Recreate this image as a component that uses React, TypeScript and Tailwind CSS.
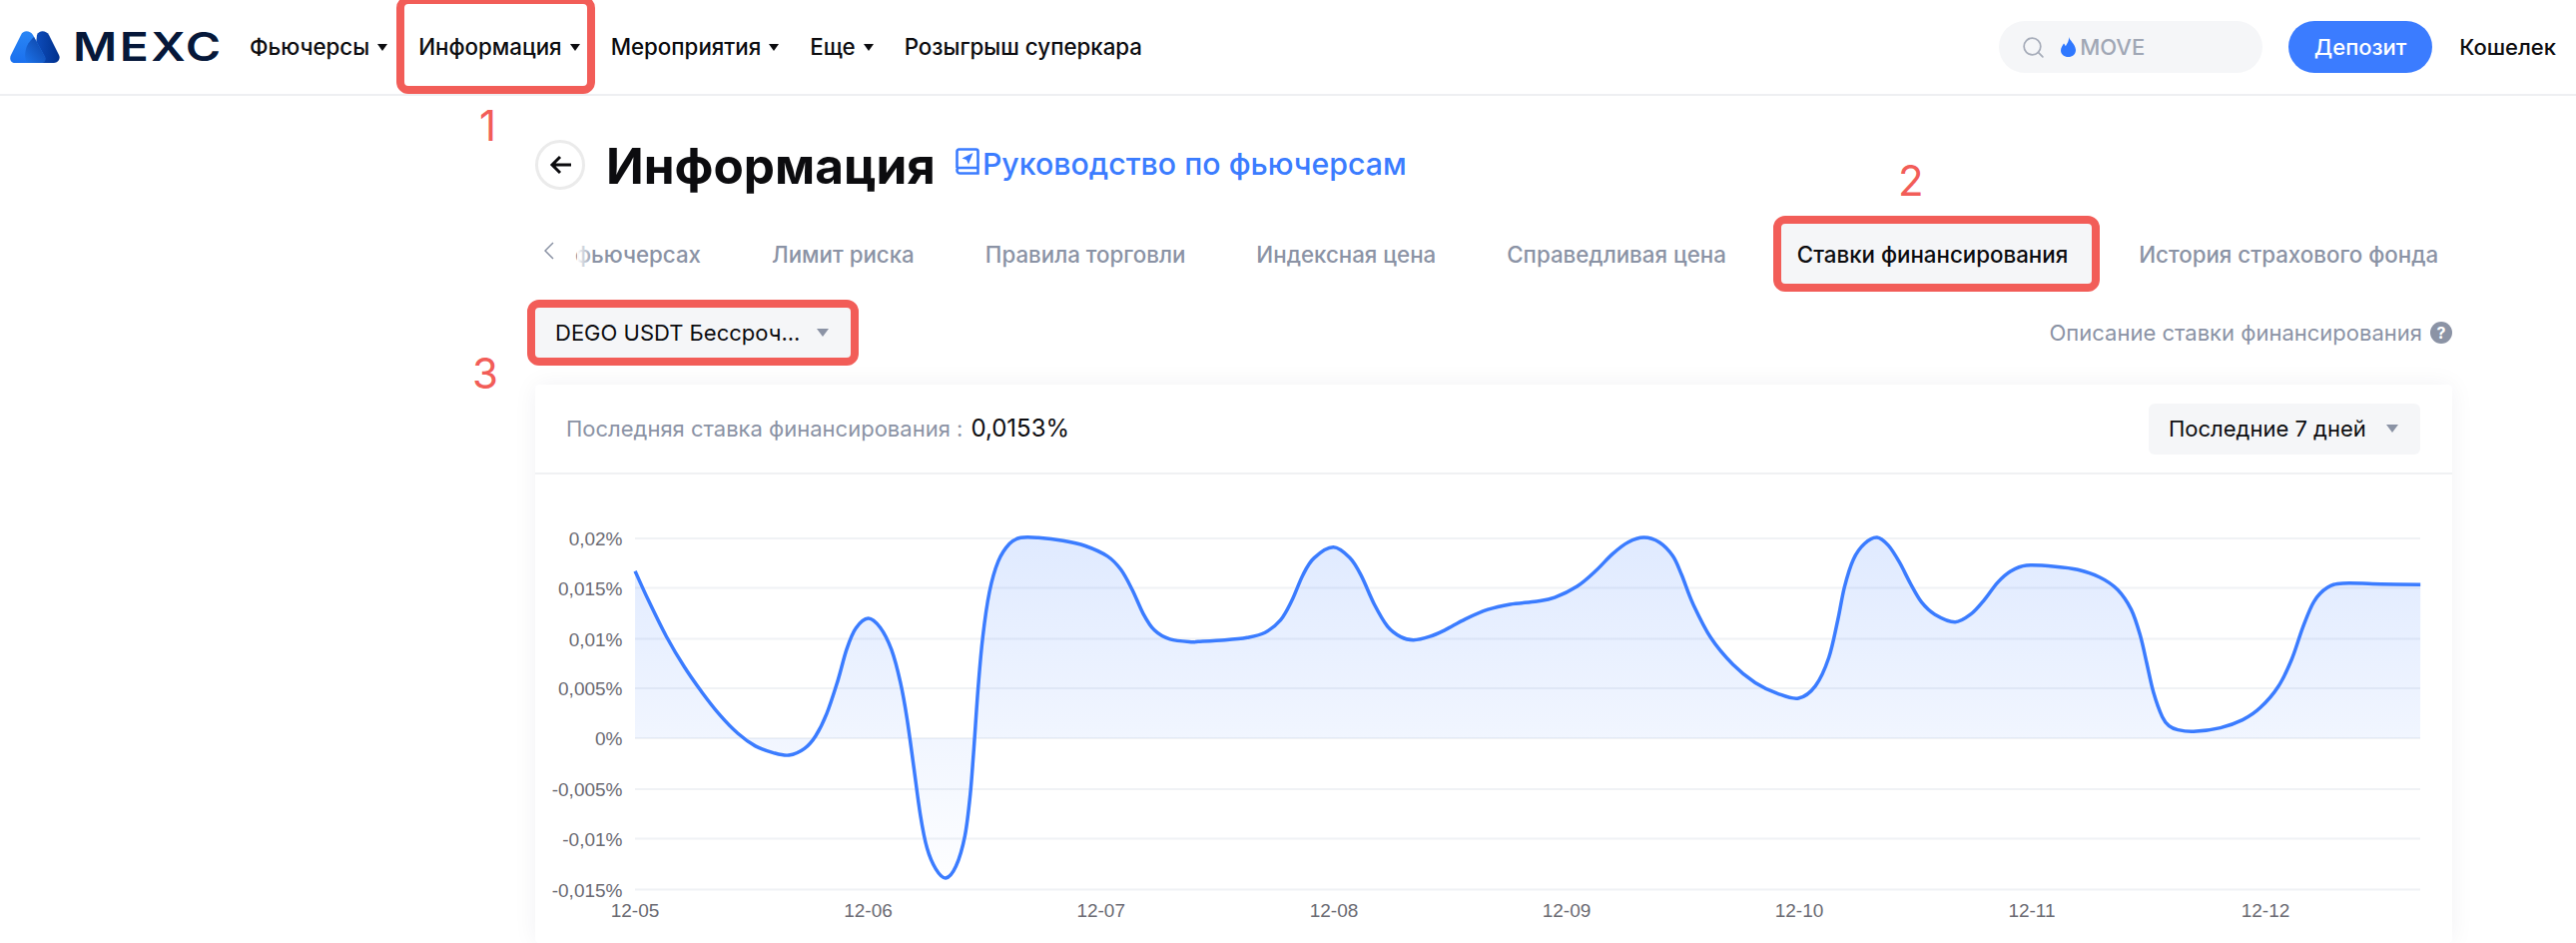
import { Search } from 'lucide-react';

const FONT = 'font-["Inter","Liberation_Sans",sans-serif]';

// points read off the reference, in page pixels
const fromZoom = (ox: number, pts: number[][]) => pts.map(([x, y]) => [ox + x / 2.24, 500 + y / 3]);

const RAW_CURVE = [
  ...fromZoom(520, [
    [260, 215], [290, 305], [330, 415], [370, 505], [410, 580], [450, 650], [490, 705], [530, 745], [570, 763], [605, 768],
    [640, 755], [665, 715], [690, 650], [715, 550], [735, 440], [755, 375], [783, 357], [810, 375], [835, 440], [855, 540],
    [870, 650], [885, 800], [900, 960], [915, 1060], [935, 1120], [957, 1137], [980, 1115], [1000, 1030], [1012, 900],
    [1020, 750], [1030, 550], [1040, 400], [1055, 260], [1075, 175], [1100, 125], [1125, 115], [1165, 115], [1220, 122],
    [1270, 137], [1320, 165], [1350, 205], [1375, 265], [1400, 350], [1425, 400], [1460, 425], [1510, 428],
  ]),
  ...fromZoom(1200, [
    [0, 427], [60, 423], [110, 416], [150, 405], [185, 370], [210, 310], [235, 220], [260, 165], [303, 143], [340, 165],
    [365, 220], [395, 320], [425, 390], [455, 417], [483, 422], [520, 415], [555, 392], [600, 357], [650, 328], [700, 312],
    [760, 308], [800, 298], [850, 265], [890, 220], [930, 160], [965, 122], [1000, 114], [1035, 122], [1065, 160], [1085, 225],
    [1110, 320], [1150, 425], [1200, 500], [1250, 555], [1300, 587], [1347, 597], [1385, 575], [1415, 490], [1435, 370],
    [1450, 250], [1470, 170], [1495, 125],
  ]),
  ...fromZoom(1880, [
    [0, 114], [25, 130], [50, 185], [75, 255], [100, 315], [130, 352], [175, 368], [210, 352], [240, 305], [270, 245],
    [300, 210], [335, 198], [400, 200], [450, 208], [500, 230], [540, 265], [570, 320], [590, 400], [605, 490], [620, 590],
    [640, 660], [655, 684], [675, 694], [710, 697], [770, 690], [820, 665], [860, 630], [900, 570], [930, 490], [955, 380], [980, 295],
    [1010, 258], [1045, 252], [1130, 254], [1219, 256],
  ]),
];

// irons out reading errors, leaves the peaks and troughs where they are
function relax(pts: number[][]): number[][] {
  return pts.map((p, i) => {
    if (i === 0 || i === pts.length - 1) return p;
    const a = pts[i - 1];
    const b = pts[i + 1];
    if ((p[1] - a[1]) * (b[1] - p[1]) <= 0) return p;
    const mid = a[1] + ((b[1] - a[1]) * (p[0] - a[0])) / (b[0] - a[0]);
    return [p[0], 0.6 * p[1] + 0.4 * mid];
  });
}

function smoothPath(pts: number[][]): string {
  let d = `M${pts[0][0].toFixed(1)} ${pts[0][1].toFixed(1)}`;
  for (let i = 0; i < pts.length - 1; i++) {
    const p0 = pts[Math.max(i - 1, 0)];
    const p1 = pts[i];
    const p2 = pts[i + 1];
    const p3 = pts[Math.min(i + 2, pts.length - 1)];
    const c1x = p1[0] + (p2[0] - p0[0]) / 6;
    const c1y = p1[1] + (p2[1] - p0[1]) / 6;
    const c2x = p2[0] - (p3[0] - p1[0]) / 6;
    const c2y = p2[1] - (p3[1] - p1[1]) / 6;
    d += `C${c1x.toFixed(1)} ${c1y.toFixed(1)} ${c2x.toFixed(1)} ${c2y.toFixed(1)} ${p2[0].toFixed(1)} ${p2[1].toFixed(1)}`;
  }
  return d;
}

const LINE = smoothPath(relax(RAW_CURVE));
const AREA = `${LINE}L2424 739L636 739Z`;

const Y_TICKS = [
  { label: '0,02%', y: 539 },
  { label: '0,015%', y: 588.5 },
  { label: '0,01%', y: 639.5 },
  { label: '0,005%', y: 689 },
  { label: '0%', y: 739 },
  { label: '-0,005%', y: 790 },
  { label: '-0,01%', y: 839.5 },
  { label: '-0,015%', y: 890.5 },
];

const X_TICKS = [
  { label: '12-05', x: 636 },
  { label: '12-06', x: 869.5 },
  { label: '12-07', x: 1102.7 },
  { label: '12-08', x: 1336 },
  { label: '12-09', x: 1569 },
  { label: '12-10', x: 1802 },
  { label: '12-11', x: 2035 },
  { label: '12-12', x: 2269 },
];

function Caret() {
  return <span className="inline-block w-0 h-0 border-x-[5px] border-x-transparent border-t-[7px] border-t-[#0c0c0f]" />;
}

function GrayCaret() {
  return <span className="inline-block w-0 h-0 border-x-[6px] border-x-transparent border-t-[8px] border-t-[#8b93a5]" />;
}

function Logo() {
  return (
    <svg width="50" height="32" viewBox="0 0 50 32" className="shrink-0">
      <defs>
        <linearGradient id="logoA" x1="0" y1="0" x2="0" y2="1">
          <stop offset="0" stopColor="#2a86f5" />
          <stop offset="1" stopColor="#1a70ee" />
        </linearGradient>
        <linearGradient id="logoB" x1="0" y1="0" x2="1" y2="0">
          <stop offset="0" stopColor="#0f4fc0" />
          <stop offset="1" stopColor="#00308c" />
        </linearGradient>
        <linearGradient id="logoC" x1="1" y1="0" x2="0" y2="1">
          <stop offset="0" stopColor="#0c3f9f" />
          <stop offset="1" stopColor="#1c74ec" />
        </linearGradient>
      </defs>
      <path d="M27 4C29 -1 36 -1 39 4L49 24C51 28 48 32 44 32H24Z" fill="url(#logoB)" />
      <path d="M11 4C13 -1 20 -1 23 4L35 26C36 29 34 32 31 32H5C1 32 -1 28 1 24Z" fill="url(#logoA)" />
      <path d="M24 6L35 26C36.500 29 35 32 31 32H17C14 27 15 20 17 15C19 11 21 9 24 6Z" fill="url(#logoC)" />
    </svg>
  );
}

function NavItem({ label, marked = false }: { label: string; marked?: boolean }) {
  return (
    <div className="relative flex items-center h-full gap-2 whitespace-nowrap">
      <span className="text-[#0c0c0f]">{label}</span>
      <Caret />
      {marked && <div className="absolute -left-[22px] -right-[15px] -top-1 bottom-0 border-8 border-[#f25d58] rounded-xl" />}
    </div>
  );
}

function Tab({ label, active = false }: { label: string; active?: boolean }) {
  if (active) {
    return (
      <div className="relative flex items-center h-[60px] text-[#0c0c0f] whitespace-nowrap">
        <div className="absolute inset-y-0 -left-4 -right-6 bg-[#f5f6f8] rounded" />
        <span className="relative pt-0.5">{label}</span>
        <div className="absolute -inset-y-2 -left-6 -right-8 border-8 border-[#f25d58] rounded-xl" />
      </div>
    );
  }
  return <div className="flex items-center h-[60px] pt-0.5 text-[#8b93a5] whitespace-nowrap">{label}</div>;
}

function Header() {
  return (
    <header className="flex items-center h-[96px] pl-[10px] pr-5 border-b-2 border-[#eeeff2] bg-white">
      <div className="flex items-center gap-[13px]">
        <Logo />
        <span className="w-[145px] text-[40px] leading-none font-semibold tracking-[2px] text-[#06183a] origin-left scale-x-[1.2]">MEXC</span>
      </div>
      <nav className="flex items-center h-full ml-[32px] gap-[31px] text-[22.3px] font-medium">
        <NavItem label="Фьючерсы" />
        <NavItem label="Информация" marked />
        <NavItem label="Мероприятия" />
        <NavItem label="Еще" />
        <span className="text-[#0c0c0f] whitespace-nowrap">Розыгрыш суперкара</span>
      </nav>
      <div className="flex items-center ml-auto">
        <div className="flex items-center w-[264px] h-[52px] pl-[22px] rounded-full bg-[#f5f6f8] text-[22px] font-medium text-[#a0a7b5]">
          <Search size={25} strokeWidth={1.7} className="text-[#a7adba]" />
          <svg width="15" height="20" viewBox="0 0 15 20" className="ml-[15px] mr-[4px]">
            <path d="M8 0C8.500 3 14.500 7 15 13C15 17.500 11.500 20 7.500 20C3.500 20 0 17.500 0 13.500C0 10.500 1.800 8.500 3 6.500C3.800 7.300 4.300 8.200 4.800 9.200C6.500 6.500 8.500 3.500 8 0Z" fill="#2f78ff" />
          </svg>
          MOVE
        </div>
        <button className="w-[144px] h-[52px] ml-[26px] rounded-full bg-[#3b7cff] text-white text-[22px] font-medium">Депозит</button>
        <span className="ml-[27px] text-[22px] font-medium text-[#0c0c0f]">Кошелек</span>
      </div>
    </header>
  );
}

function TitleRow() {
  return (
    <div className="flex items-center h-[50px] mt-[44px]">
      <div className="flex items-center justify-center w-[50px] h-[50px] rounded-full border-[3px] border-[#ebebeb]">
        <svg width="22" height="20" viewBox="0 0 22 20" fill="none" stroke="#0c0c0f" strokeWidth="3">
          <path d="M22 10H3M11 2L3 10L11 18" />
        </svg>
      </div>
      <h1 className="ml-[21px] pt-[3px] text-[49.5px] leading-none font-bold text-[#0c0c0f]">Информация</h1>
      <svg width="24" height="27" viewBox="0 0 24 27" fill="none" className="ml-[20px] -mt-2">
        <path d="M1.500 20V3.500A2 2 0 0 1 3.500 1.500H20.500A2 2 0 0 1 22.500 3.500V25.500H4.500A3 3 0 0 1 1.500 22.500V22A2 2 0 0 1 3.500 20H22.500" stroke="#3b7cff" strokeWidth="2.600" />
        <path d="M17.500 5L6.500 10.500L11 12L13 16.500Z" fill="#3b7cff" />
      </svg>
      <a className="ml-[3px] text-[30.3px] font-medium text-[#3b7cff]">Руководство по фьючерсам</a>
    </div>
  );
}

function Tabs() {
  return (
    <div className="flex items-center h-[60px] mt-[34px] text-[22.3px] font-medium">
      <svg width="10" height="18" viewBox="0 0 10 18" fill="none" stroke="#8b93a5" strokeWidth="1.500" className="ml-[9px] -mt-1.5">
        <path d="M9 1L1 9L9 17" />
      </svg>
      <div className="relative flex justify-end w-[124px] ml-[23px] pt-0.5 whitespace-nowrap text-[#8b93a5]">
        <span>фьючерсах</span>
        <div className="absolute left-0 top-0 bottom-0 w-[16px] bg-gradient-to-r from-white to-transparent" />
      </div>
      <div className="flex items-center gap-[71px] ml-[71px]">
        <Tab label="Лимит риска" />
        <Tab label="Правила торговли" />
        <Tab label="Индексная цена" />
        <Tab label="Справедливая цена" />
        <Tab label="Ставки финансирования" active />
        <Tab label="История страхового фонда" />
      </div>
    </div>
  );
}

function FilterRow() {
  return (
    <div className="flex items-center justify-between h-[50px] mt-[24px]">
      <div className="relative flex items-center w-[316px] h-[50px] pl-[20px] rounded bg-[#f5f6f8] text-[22px] text-[#0c0c0f] whitespace-nowrap">
        DEGO USDT Бессроч...
        <span className="absolute right-[22px] inset-y-0 flex items-center"><GrayCaret /></span>
        <div className="absolute -inset-2 border-8 border-[#f25d58] rounded-xl" />
      </div>
      <div className="flex items-center gap-2 text-[22px] text-[#8b93a5]">
        Описание ставки финансирования
        <svg width="22" height="22" viewBox="0 0 22 22">
          <circle cx="11" cy="11" r="11" fill="#8b93a5" />
          <text x="11" y="17" textAnchor="middle" fontSize="16" fontWeight="700" fill="#fff" fontFamily="Inter">?</text>
        </svg>
      </div>
    </div>
  );
}

function Chart() {
  return (
    <svg viewBox="536 475 1920 469" className="block w-[1920px] h-[469px]" fontFamily="'Liberation Sans', sans-serif">
      <defs>
        <linearGradient id="area" gradientUnits="userSpaceOnUse" x1="0" y1="539" x2="0" y2="900">
          <stop offset="0" stopColor="#3b7cff" stopOpacity="0.16" />
          <stop offset="1" stopColor="#3b7cff" stopOpacity="0" />
        </linearGradient>
      </defs>
      {Y_TICKS.map((t) => (
        <g key={t.label}>
          <line x1="636" x2="2424" y1={t.y} y2={t.y} stroke="#f0f2f5" strokeWidth="2" />
          <text x="623.500" y={t.y + 7} textAnchor="end" fontSize="19" fill="#6b6b73">{t.label}</text>
        </g>
      ))}
      <path d={AREA} fill="url(#area)" />
      <path d={LINE} fill="none" stroke="#3b7cff" strokeWidth="3.500" strokeLinejoin="round" />
      {X_TICKS.map((t) => (
        <text key={t.label} x={t.x} y="918" textAnchor="middle" fontSize="19" fill="#6b6b73">{t.label}</text>
      ))}
    </svg>
  );
}

function ChartCard() {
  return (
    <section className="mt-[27px] bg-white rounded shadow-[0_0_24px_rgba(20,30,60,0.06)]">
      <div className="flex items-center justify-between h-[90px] pl-[31px] pr-[32px] border-b-2 border-[#f0f1f3]">
        <div className="flex items-center text-[22px]">
          <span className="text-[#8b93a5]">Последняя ставка финансирования :</span>
          <span className="ml-2 text-[24px] text-[#0c0c0f]">0,0153%</span>
        </div>
        <div className="flex items-center justify-between w-[272px] h-[51px] pl-[20px] pr-[22px] rounded-md bg-[#f5f6f8] text-[22px] text-[#0c0c0f]">
          Последние 7 дней
          <GrayCaret />
        </div>
      </div>
      <Chart />
    </section>
  );
}

export default function App() {
  return (
    <div className={`relative h-[944px] overflow-hidden bg-white ${FONT}`}>
      <Header />
      <main className="w-[1920px] ml-[536px]">
        <TitleRow />
        <Tabs />
        <FilterRow />
        <ChartCard />
      </main>
      {/* annotation numbers on top of the screenshot */}
      <span className="absolute left-[480px] top-[101px] text-[42px] leading-[1.2] text-[#f25d58]">1</span>
      <span className="absolute left-[1901px] top-[156px] text-[42px] leading-[1.2] text-[#f25d58]">2</span>
      <span className="absolute left-[473px] top-[349px] text-[42px] leading-[1.2] text-[#f25d58]">3</span>
    </div>
  );
}
